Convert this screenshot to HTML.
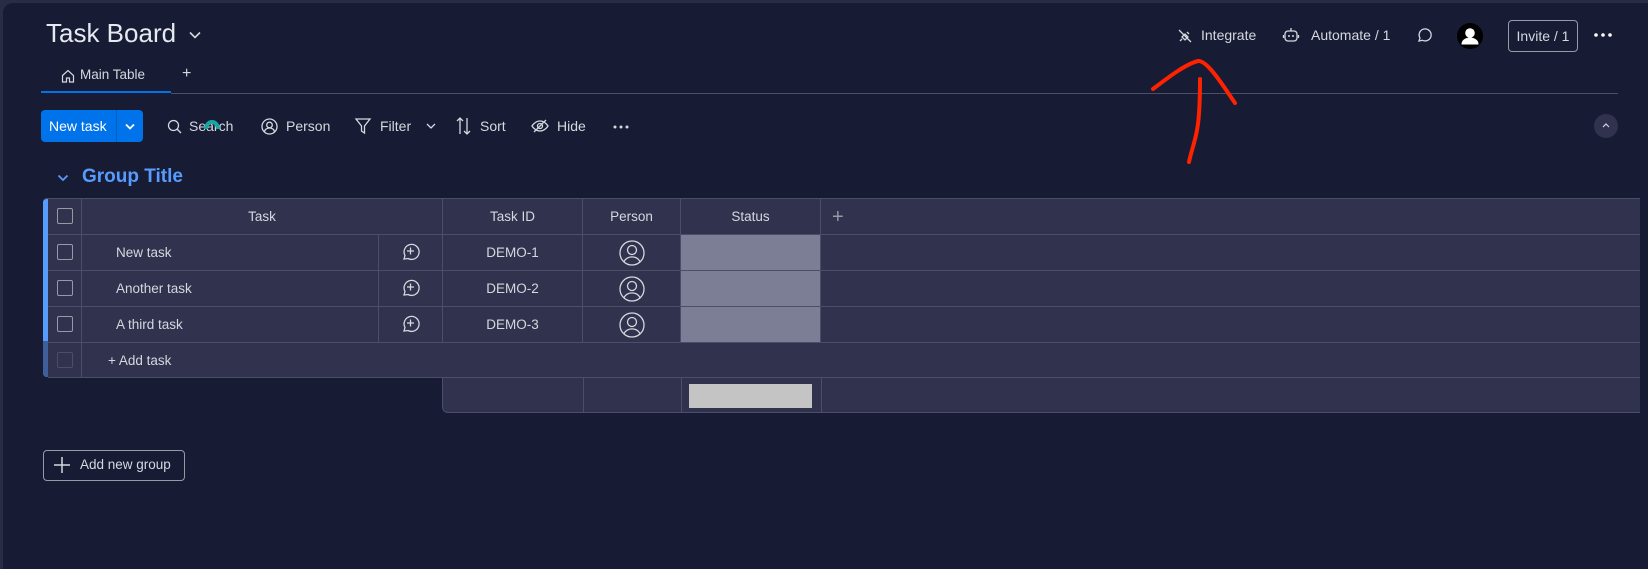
<!DOCTYPE html>
<html><head><meta charset="utf-8"><style>
*{box-sizing:border-box;margin:0;padding:0}
body{width:1648px;height:569px;background:#2a2c45;font-family:"Liberation Sans",sans-serif;color:#d5d8df;overflow:hidden;position:relative}
.panel{position:absolute;left:3px;top:3px;right:0;bottom:0;background:#181b34;border-top-left-radius:10px}
.a{position:absolute}
.t{font-size:14px;color:#d5d8df;white-space:nowrap}
.cell{position:absolute;border-right:1px solid #4b4e69;border-bottom:1px solid #4b4e69;display:flex;align-items:center;justify-content:center;font-size:13.5px}
.cb{position:absolute;width:16px;height:16px;border:1px solid #9699a6;border-radius:2px}
svg{position:absolute;overflow:visible}
</style></head><body>
<div class="panel"></div>

<div class="a" style="left:46px;top:18px;font-size:26px;color:#e6e9ef">Task Board</div>
<svg style="left:189px;top:31px" width="12" height="8"><path d="M1 1.5l5 5 5-5" stroke="#d5d8df" stroke-width="1.6" fill="none"/></svg>

<svg style="left:61px;top:69px" width="14" height="14"><path d="M1.5 6.5L7 1.5l5.5 5V13h-4V9h-3v4h-4z" stroke="#d5d8df" stroke-width="1.2" fill="none"/></svg>
<div class="a t" style="left:80px;top:67px;font-size:13.5px">Main Table</div>
<div class="a t" style="left:182px;top:65px;font-size:16px">+</div>
<div class="a" style="left:41px;top:91px;width:130px;height:2px;background:#0073ea"></div>
<div class="a" style="left:171px;top:93px;width:1447px;height:1px;background:#4b4e69"></div>

<!-- top right -->
<svg style="left:1177px;top:28px" width="16" height="16"><path d="M2 2l12 12M5 9l3-3 3 3-3 3z M10 4l2 2M3 13l2-2" stroke="#d5d8df" stroke-width="1.3" fill="none"/></svg>
<div class="a t" style="left:1201px;top:27px">Integrate</div>
<svg style="left:1283px;top:27px" width="16" height="16"><rect x="2" y="4" width="12" height="10" rx="3" stroke="#d5d8df" stroke-width="1.3" fill="none"/><path d="M8 1v3M0.5 8v3M15.5 8v3" stroke="#d5d8df" stroke-width="1.3"/><circle cx="6" cy="9" r="1" fill="#d5d8df"/><circle cx="10" cy="9" r="1" fill="#d5d8df"/></svg>
<div class="a t" style="left:1311px;top:27px">Automate / 1</div>
<svg style="left:1416px;top:27px" width="16" height="16"><path d="M3 14l1-3a6 6 0 1 1 2.5 2.3z" stroke="#d5d8df" stroke-width="1.3" fill="none"/></svg>
<svg style="left:1457px;top:23px" width="26" height="26"><circle cx="13" cy="13" r="13" fill="#000"/><circle cx="13" cy="10" r="4.8" fill="#fff"/><path d="M4.5 21a8.5 6.5 0 0 1 17 0v0.5H4.5z" fill="#fff"/></svg>
<div class="a t" style="left:1508px;top:20px;width:70px;height:32px;border:1px solid #9699a6;border-radius:4px;display:flex;align-items:center;justify-content:center">Invite / 1</div>
<svg style="left:1594px;top:33px" width="20" height="4"><circle cx="2" cy="2" r="1.8" fill="#fff"/><circle cx="9" cy="2" r="1.8" fill="#fff"/><circle cx="16" cy="2" r="1.8" fill="#fff"/></svg>

<!-- toolbar -->
<div class="a" style="left:41px;top:110px;width:102px;height:32px;background:#0073ea;border-radius:4px"></div>
<div class="a" style="left:116px;top:110px;width:1px;height:32px;background:#0060c0"></div>
<div class="a t" style="left:49px;top:118px;color:#fff">New task</div>
<svg style="left:124px;top:123px" width="12" height="8"><path d="M2 1.5l4 4 4-4" stroke="#fff" stroke-width="1.8" fill="none"/></svg>
<svg style="left:167px;top:119px" width="16" height="16"><circle cx="6.5" cy="6.5" r="5" stroke="#d5d8df" stroke-width="1.3" fill="none"/><path d="M10 10l4 4" stroke="#d5d8df" stroke-width="1.3"/></svg>
<div class="a t" style="left:189px;top:118px">Search</div>
<svg style="left:204px;top:119px" width="16" height="10"><path d="M2 10a6 7 0 0 1 12 0" stroke="#1aa6a0" stroke-width="4" fill="none"/></svg>
<svg style="left:261px;top:118px" width="17" height="17"><circle cx="8.5" cy="8.5" r="7.5" stroke="#d5d8df" stroke-width="1.3" fill="none"/><circle cx="8.5" cy="7" r="2.8" stroke="#d5d8df" stroke-width="1.3" fill="none"/><path d="M3.5 14a5 4 0 0 1 10 0" stroke="#d5d8df" stroke-width="1.3" fill="none"/></svg>
<div class="a t" style="left:286px;top:118px">Person</div>
<svg style="left:355px;top:118px" width="16" height="17"><path d="M1 1h14l-5.5 7v7l-3-2V8z" stroke="#d5d8df" stroke-width="1.3" fill="none"/></svg>
<div class="a t" style="left:380px;top:118px">Filter</div>
<svg style="left:426px;top:123px" width="10" height="7"><path d="M1 1l4 4 4-4" stroke="#d5d8df" stroke-width="1.3" fill="none"/></svg>
<svg style="left:456px;top:117px" width="16" height="18"><path d="M4 17V1M1 4l3-3 3 3M11 1v16M8 14l3 3 3-3" stroke="#d5d8df" stroke-width="1.3" fill="none"/></svg>
<div class="a t" style="left:480px;top:118px">Sort</div>
<svg style="left:531px;top:119px" width="18" height="14"><path d="M1 7s3-5 8-5 8 5 8 5-3 5-8 5-8-5-8-5z" stroke="#d5d8df" stroke-width="1.3" fill="none"/><circle cx="9" cy="7" r="2.5" stroke="#d5d8df" stroke-width="1.3" fill="none"/><path d="M3 13L15 1" stroke="#d5d8df" stroke-width="1.3"/></svg>
<div class="a t" style="left:557px;top:118px">Hide</div>
<svg style="left:613px;top:125px" width="16" height="4"><circle cx="2" cy="2" r="1.5" fill="#d5d8df"/><circle cx="8" cy="2" r="1.5" fill="#d5d8df"/><circle cx="14" cy="2" r="1.5" fill="#d5d8df"/></svg>
<div class="a" style="left:1594px;top:114px;width:24px;height:24px;border-radius:50%;background:#30324e"></div>
<svg style="left:1602px;top:123px" width="8" height="5"><path d="M1 4l3-3 3 3" stroke="#d5d8df" stroke-width="1.2" fill="none"/></svg>

<!-- group -->
<svg style="left:57px;top:174px" width="12" height="8"><path d="M1.5 1.5l4.5 4.5 4.5-4.5" stroke="#579bfc" stroke-width="1.8" fill="none"/></svg>
<div class="a" style="left:82px;top:166px;font-size:19px;font-weight:bold;color:#579bfc">Group Title</div>

<!-- table -->
<div class="a" style="left:43px;top:198px;width:1597px;height:179px;background:#30324e;border-top:1px solid #4b4e69;border-radius:4px 0 0 4px;overflow:hidden">
<div class="a" style="left:0;top:0;width:5px;height:178px;background:#579bfc"></div>
<div class="a" style="left:0;top:142px;width:5px;height:36px;background:#3f5f9a"></div>
</div>
<div class="a" style="left:442px;top:377px;width:1198px;height:36px;background:#30324e;border-bottom:1px solid #4b4e69;border-left:1px solid #4b4e69;border-radius:0 0 0 6px"></div>

<!-- header -->
<div class="cell" style="left:48px;top:199px;width:34px;height:36px"></div>
<div class="cell" style="left:82px;top:199px;width:361px;height:36px">Task</div>
<div class="cell" style="left:443px;top:199px;width:140px;height:36px">Task ID</div>
<div class="cell" style="left:583px;top:199px;width:98px;height:36px">Person</div>
<div class="cell" style="left:681px;top:199px;width:140px;height:36px">Status</div>
<div class="cell" style="left:821px;top:199px;width:819px;height:36px;border-right:none"></div>
<div class="a" style="left:832px;top:206px;font-size:20px;color:#9699a6">+</div>
<div class="cb" style="left:57px;top:208px"></div>

<!-- rows -->
<div class="cell" style="left:48px;top:235px;width:34px;height:36px"></div>
<div class="cell" style="left:82px;top:235px;width:297px;height:36px;justify-content:flex-start;padding-left:34px">New task</div>
<div class="cell" style="left:379px;top:235px;width:64px;height:36px"></div>
<div class="cell" style="left:443px;top:235px;width:140px;height:36px">DEMO-1</div>
<div class="cell" style="left:583px;top:235px;width:98px;height:36px"></div>
<div class="cell" style="left:681px;top:235px;width:140px;height:36px;background:#7b7e94"></div>
<div class="cell" style="left:821px;top:235px;width:819px;height:36px;border-right:none"></div>

<div class="cell" style="left:48px;top:271px;width:34px;height:36px"></div>
<div class="cell" style="left:82px;top:271px;width:297px;height:36px;justify-content:flex-start;padding-left:34px">Another task</div>
<div class="cell" style="left:379px;top:271px;width:64px;height:36px"></div>
<div class="cell" style="left:443px;top:271px;width:140px;height:36px">DEMO-2</div>
<div class="cell" style="left:583px;top:271px;width:98px;height:36px"></div>
<div class="cell" style="left:681px;top:271px;width:140px;height:36px;background:#7b7e94"></div>
<div class="cell" style="left:821px;top:271px;width:819px;height:36px;border-right:none"></div>

<div class="cell" style="left:48px;top:307px;width:34px;height:36px"></div>
<div class="cell" style="left:82px;top:307px;width:297px;height:36px;justify-content:flex-start;padding-left:34px">A third task</div>
<div class="cell" style="left:379px;top:307px;width:64px;height:36px"></div>
<div class="cell" style="left:443px;top:307px;width:140px;height:36px">DEMO-3</div>
<div class="cell" style="left:583px;top:307px;width:98px;height:36px"></div>
<div class="cell" style="left:681px;top:307px;width:140px;height:36px;background:#7b7e94"></div>
<div class="cell" style="left:821px;top:307px;width:819px;height:36px;border-right:none"></div>

<div class="cell" style="left:48px;top:343px;width:34px;height:35px"></div>
<div class="cell" style="left:82px;top:343px;width:1558px;height:35px;border-right:none;justify-content:flex-start;padding-left:26px">+ Add task</div>
<div class="cb" style="left:57px;top:244px"></div>
<div class="cb" style="left:57px;top:280px"></div>
<div class="cb" style="left:57px;top:316px"></div>
<div class="cb" style="left:57px;top:352px;border-color:#4b4e69"></div>

<div class="a" style="left:583px;top:378px;width:1px;height:35px;background:#4b4e69"></div>
<div class="a" style="left:681px;top:378px;width:1px;height:35px;background:#4b4e69"></div>
<div class="a" style="left:821px;top:378px;width:1px;height:35px;background:#4b4e69"></div>
<div class="a" style="left:689px;top:384px;width:123px;height:24px;background:#c4c4c4"></div>

<!-- icons in rows -->
<svg style="left:400px;top:242px" width="20" height="20"><path d="M4 17l1-3.5A7.5 7.5 0 1 1 8 16.5z" stroke="#d5d8df" stroke-width="1.3" fill="none"/><path d="M10.5 5.5v7M7 9h7" stroke="#d5d8df" stroke-width="1.3"/></svg>
<svg style="left:400px;top:278px" width="20" height="20"><path d="M4 17l1-3.5A7.5 7.5 0 1 1 8 16.5z" stroke="#d5d8df" stroke-width="1.3" fill="none"/><path d="M10.5 5.5v7M7 9h7" stroke="#d5d8df" stroke-width="1.3"/></svg>
<svg style="left:400px;top:314px" width="20" height="20"><path d="M4 17l1-3.5A7.5 7.5 0 1 1 8 16.5z" stroke="#d5d8df" stroke-width="1.3" fill="none"/><path d="M10.5 5.5v7M7 9h7" stroke="#d5d8df" stroke-width="1.3"/></svg>
<svg style="left:619px;top:240px" width="26" height="26"><circle cx="13" cy="13" r="12" stroke="#d5d8df" stroke-width="1.3" fill="none"/><circle cx="13" cy="10" r="4.5" stroke="#d5d8df" stroke-width="1.3" fill="none"/><path d="M5 21.5a8.5 7 0 0 1 16 0" stroke="#d5d8df" stroke-width="1.3" fill="none"/></svg>
<svg style="left:619px;top:276px" width="26" height="26"><circle cx="13" cy="13" r="12" stroke="#d5d8df" stroke-width="1.3" fill="none"/><circle cx="13" cy="10" r="4.5" stroke="#d5d8df" stroke-width="1.3" fill="none"/><path d="M5 21.5a8.5 7 0 0 1 16 0" stroke="#d5d8df" stroke-width="1.3" fill="none"/></svg>
<svg style="left:619px;top:312px" width="26" height="26"><circle cx="13" cy="13" r="12" stroke="#d5d8df" stroke-width="1.3" fill="none"/><circle cx="13" cy="10" r="4.5" stroke="#d5d8df" stroke-width="1.3" fill="none"/><path d="M5 21.5a8.5 7 0 0 1 16 0" stroke="#d5d8df" stroke-width="1.3" fill="none"/></svg>

<!-- add new group -->
<div class="a" style="left:43px;top:450px;width:142px;height:31px;border:1px solid #9699a6;border-radius:4px"></div>
<svg style="left:54px;top:457px" width="16" height="16"><path d="M8 0v16M0 8h16" stroke="#d5d8df" stroke-width="1.5"/></svg>
<div class="a t" style="left:80px;top:457px;font-size:13.5px">Add new group</div>

<!-- red arrow -->
<svg style="left:0;top:0" width="1648" height="569"><path d="M1153 89C1170 76 1186 64 1198 61C1207 60 1222 84 1235 103" stroke="#ff2200" stroke-width="4" fill="none" stroke-linecap="round"/><path d="M1200 79C1200 100 1199 120 1197 130C1195 142 1191 152 1189 162" stroke="#ff2200" stroke-width="4" fill="none" stroke-linecap="round"/></svg>
</body></html>
